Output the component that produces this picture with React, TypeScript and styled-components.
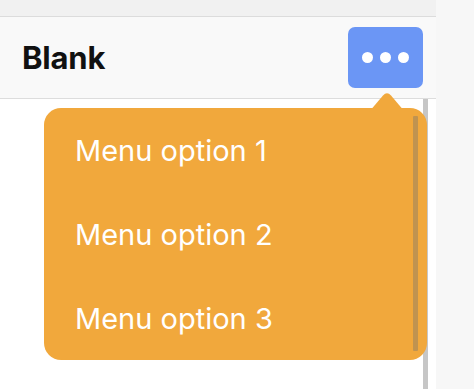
import React from "react";
import styled, { createGlobalStyle } from "styled-components";

const GlobalStyle = createGlobalStyle`
  html, body {
    margin: 0;
    padding: 0;
    background: #ffffff;
  }
  body {
    font-family: Inter, "Liberation Sans", sans-serif;
    -webkit-font-smoothing: antialiased;
  }
`;

const options = ["Menu option 1", "Menu option 2", "Menu option 3"];

const Page = styled.div`
  display: flex;
  height: 100vh;
  overflow: hidden;
`;

const MainColumn = styled.div`
  position: relative;
  width: 436px;
  display: flex;
  flex-direction: column;
  background: #ffffff;
`;

const SidePanel = styled.div`
  flex: 1;
  background: #f7f7f7;
`;

const TopStrip = styled.div`
  height: 16px;
  background: #f1f1f1;
  border-bottom: 1px solid #dcdcdc;
`;

const Header = styled.header`
  height: 82px;
  box-sizing: border-box;
  display: flex;
  align-items: center;
  justify-content: space-between;
  padding: 0 13px 0 22px;
  background: #f9f9f9;
  border-bottom: 1px solid #dddddd;
`;

const Title = styled.h1`
  margin: 0;
  font-size: 31px;
  font-weight: 700;
  color: #111111;
  letter-spacing: -0.2px;
`;

const MoreButton = styled.button`
  width: 75px;
  height: 61px;
  border: none;
  border-radius: 7px;
  background: #6b96f5;
  display: flex;
  align-items: center;
  justify-content: center;
  gap: 7px;
  padding: 0;
  cursor: pointer;
`;

const Dot = styled.span`
  width: 11px;
  height: 11px;
  border-radius: 50%;
  background: #ffffff;
`;

const Content = styled.div`
  flex: 1;
  display: flex;
  justify-content: flex-end;
  padding-right: 8px;
`;

const Track = styled.div`
  width: 5px;
  background: #c6c6c6;
`;

const Menu = styled.ul`
  position: absolute;
  left: 44px;
  top: 108px;
  width: 383px;
  margin: 0;
  padding: 0;
  list-style: none;
  background: #f1a83c;
  border-radius: 17px;
`;

const Pointer = styled.svg`
  position: absolute;
  left: 325px;
  top: -16px;
`;

const ScrollThumb = styled.div`
  position: absolute;
  right: 9px;
  top: 8px;
  bottom: 9px;
  width: 5px;
  border-radius: 1px;
  background: #c09350;
`;

const Item = styled.li`
  height: 84px;
  display: flex;
  align-items: center;
  padding-left: 31px;
  font-size: 29px;
  font-weight: 400;
  color: #ffffff;
`;

export default function App() {
  return (
    <>
      <GlobalStyle />
      <Page>
        <MainColumn>
          <TopStrip />
          <Header>
            <Title>Blank</Title>
            <MoreButton aria-label="More">
              <Dot />
              <Dot />
              <Dot />
            </MoreButton>
          </Header>
          <Content>
            <Track />
          </Content>
          <Menu>
            <Pointer width="36" height="20" viewBox="0 0 36 20">
              <path d="M0 20 L14 3.5 Q18 -1 22 3.5 L36 20 Z" fill="#f1a83c" />
            </Pointer>
            <ScrollThumb />
            {options.map((o) => (
              <Item key={o}>{o}</Item>
            ))}
          </Menu>
        </MainColumn>
        <SidePanel />
      </Page>
    </>
  );
}
